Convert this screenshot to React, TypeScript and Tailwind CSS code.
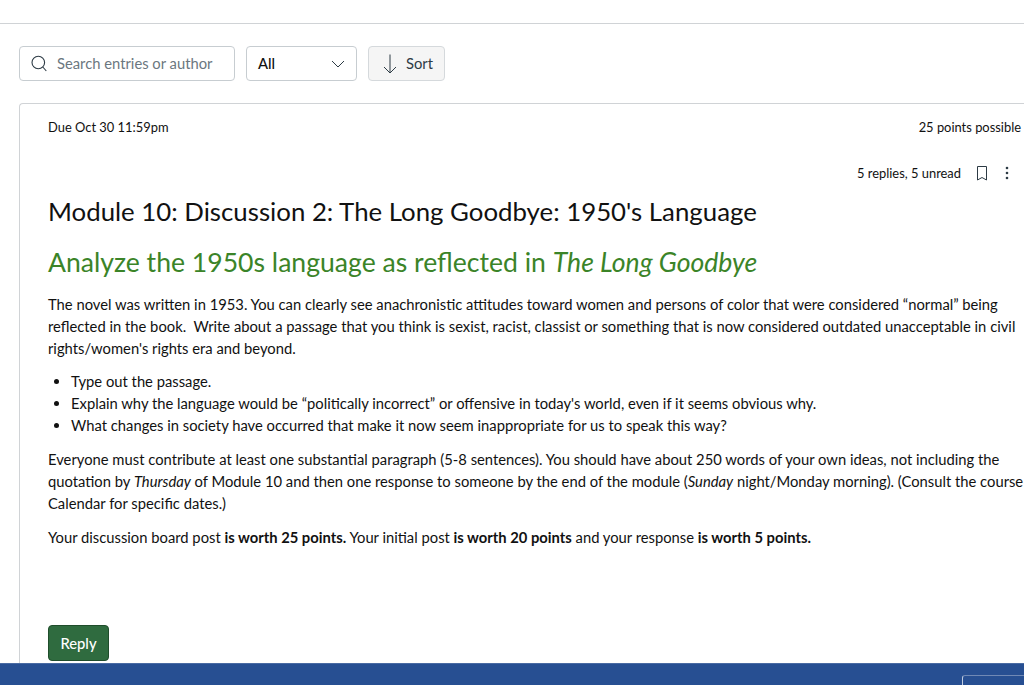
export default function App() {
  return (
    <div className="h-[685px] w-[1024px] overflow-hidden bg-white flex flex-col font-['Lato',sans-serif] text-[#111] antialiased">
      <div className="flex-1 min-h-0 overflow-hidden">
        {/* Top rule */}
        <div className="mt-[23px] h-px bg-[#d0d3d6]" />

        {/* Toolbar */}
        <div className="mt-[22px] ml-[19px] flex items-stretch gap-[11px] h-[35px]">
          <div className="w-[216px] flex items-center rounded-[4px] border border-[#c7cdd1] pl-[11px]">
            <svg width="16" height="17" viewBox="0 0 16 17" fill="none" stroke="#2d3b45" strokeWidth="1.1">
              <circle cx="7.3" cy="7.5" r="6.3" />
              <path d="M11.8 12 L15.3 16" />
            </svg>
            <span className="ml-[10px] text-[14.77px] text-[#6b7780]">Search entries or author</span>
          </div>
          <div className="w-[111px] flex items-center justify-between rounded-[4px] border border-[#c7cdd1] pl-[11px] pr-[11px]">
            <span className="text-[14.77px] font-medium">All</span>
            <svg width="14" height="8" viewBox="0 0 14 8" fill="none" stroke="#2d3b45" strokeWidth="1">
              <path d="M1 1 L7 7 L13 1" />
            </svg>
          </div>
          <div className="w-[77px] flex items-center rounded-[4px] border border-[#d5d9dc] bg-[#f5f5f5] pl-[14px]">
            <svg width="14" height="20" viewBox="0 0 14 20" fill="none" stroke="#2d3b45" strokeWidth="1">
              <path d="M7 0.5 V19 M1 13 L7 19 L13 13" />
            </svg>
            <span className="ml-[9px] text-[14.77px] text-[#2d3b45]">Sort</span>
          </div>
        </div>

        {/* Discussion card */}
        <div className="mt-[22px] ml-[19px] w-[1030px] rounded-tl-[4px] border-l border-t border-[#d0d3d6] pl-[28px] pt-[14px] pb-[10px]">
          <div className="w-[973px] flex justify-between text-[12.9px] leading-[18px]">
            <span>Due Oct 30 11:59pm</span>
            <span>25 points possible</span>
          </div>

          <div className="mt-[28px] w-[961px] flex items-center justify-end text-[12.9px] leading-[18px]">
            <span>5 replies, 5 unread</span>
            <svg width="12" height="15" viewBox="0 0 12 15" fill="none" stroke="#2d3b45" strokeWidth="1" className="ml-[15px]">
              <path d="M1.5 0.5 H10.5 V14 L6 11.5 L1.5 14 Z" />
            </svg>
            <svg width="4" height="14" viewBox="0 0 4 14" fill="#2d3b45" className="ml-[17px]">
              <circle cx="2" cy="2" r="1.3" />
              <circle cx="2" cy="7" r="1.3" />
              <circle cx="2" cy="12" r="1.3" />
            </svg>
          </div>

          <h1 className="mt-[13px] text-[25.8px] leading-[32px] font-normal">
            Module 10: Discussion 2: The Long Goodbye: 1950's Language
          </h1>

          <h2 className="mt-[18px] text-[26.6px] leading-[34px] font-normal text-[#3b8428]">
            Analyze the 1950s language as reflected in <em>The Long Goodbye</em>
          </h2>

          <div className="mt-[14px] w-[990px] text-[14.77px] leading-[22px]">
            <p>
              The novel was written in 1953. You can clearly see anachronistic attitudes toward women and persons of color that were considered “normal” being reflected in the book.&nbsp; Write about a passage that you think is sexist, racist, classist or something that is now considered outdated unacceptable in civil rights/women's rights era and beyond.
            </p>
            <ul className="mt-[11px] list-disc pl-[23px]">
              <li>Type out the passage.</li>
              <li>Explain why the language would be “politically incorrect” or offensive in today's world, even if it seems obvious why.</li>
              <li>What changes in society have occurred that make it now seem inappropriate for us to speak this way?</li>
            </ul>
            <p className="mt-[12px] w-[985px]">
              Everyone must contribute at least one substantial paragraph (5-8 sentences). You should have about 250 words of your own ideas, not including the quotation by <em>Thursday</em> of Module 10 and then one response to someone by the end of the module (<em>Sunday</em> night/Monday morning). (Consult the course Calendar for specific dates.)
            </p>
            <p className="mt-[12px]">
              Your discussion board post <strong>is worth 25 points.</strong> Your initial post <strong>is worth 20 points</strong> and your response <strong>is worth 5 points.</strong>
            </p>
          </div>

          <button className="mt-[77px] h-[36px] w-[61px] rounded-[4px] border border-[#1f4d2b] bg-[#2f6b3f] text-[14.77px] font-medium text-white">
            Reply
          </button>
        </div>
      </div>

      {/* Bottom bar */}
      <div className="h-[22px] shrink-0 bg-[#274f92] border-t border-[#4a6ba3] pl-[962px] pt-[11px]">
        <div className="h-[12px] rounded-tl-[3px] border-l border-t border-l-[#c0cce0] border-t-[#7089b5]" />
      </div>
    </div>
  );
}
